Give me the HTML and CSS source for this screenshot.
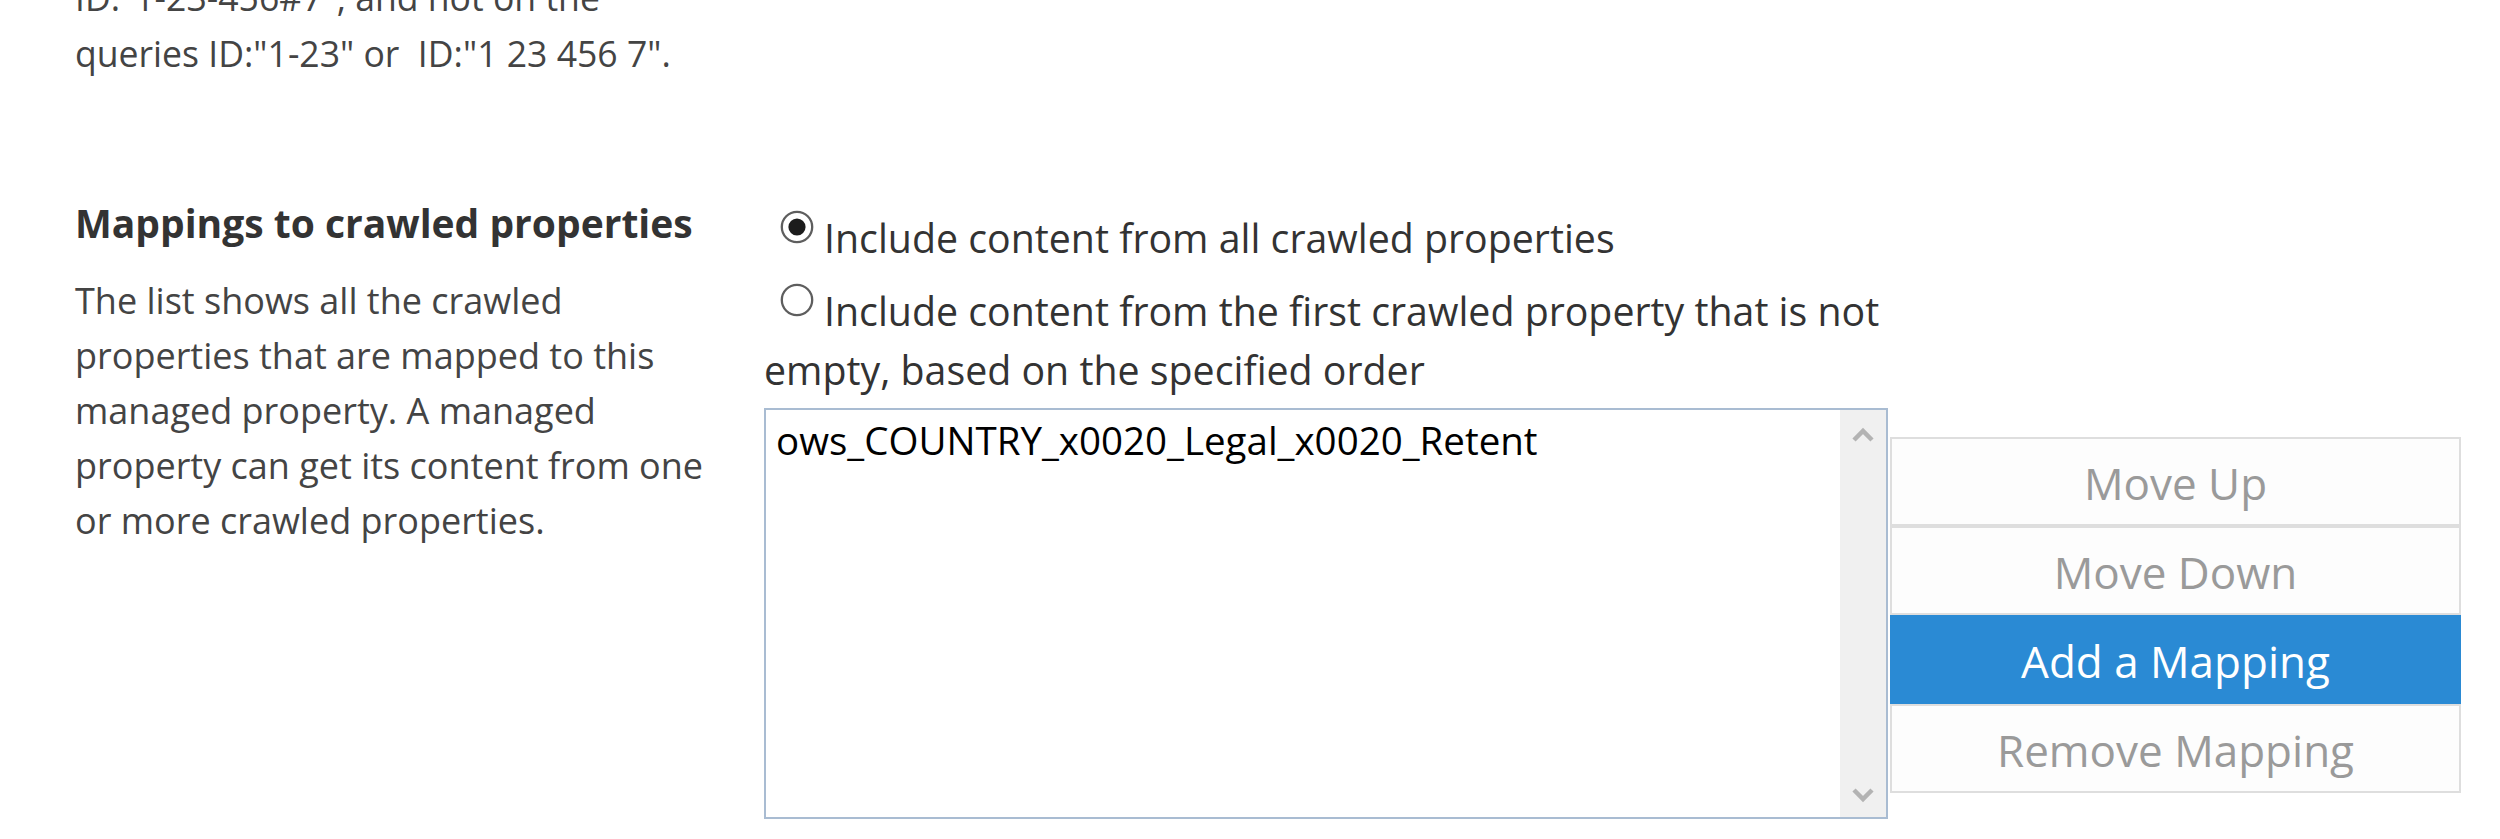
FILE: index.html
```html
<!DOCTYPE html>
<html lang="en">
<head>
<meta charset="utf-8">
<title>Mappings to crawled properties</title>
<link rel="stylesheet" href="styles.css">
</head>
<body>
<div class="page">
  <section class="prev">
    <p class="prev-desc">ID:"1-23-456#7", and not on the<br>queries ID:"1-23" or&nbsp; ID:"1 23 456 7".</p>
  </section>
  <section class="row">
    <div class="left">
      <h3 class="title">Mappings to crawled properties</h3>
      <p class="desc">The list shows all the crawled<br>properties that are mapped to this<br>managed property. A managed<br>property can get its content from one<br>or more crawled properties.</p>
    </div>
    <div class="right">
      <label class="radio"><svg class="rb" viewBox="0 0 34 34" width="34" height="34"><circle cx="17" cy="17" r="15.2" fill="#fff" stroke="#5e5e5e" stroke-width="2.3"/><circle cx="17" cy="17" r="8.6" fill="#1c1c1c"/></svg>Include content from all crawled properties</label>
      <label class="radio"><svg class="rb" viewBox="0 0 34 34" width="34" height="34"><circle cx="17" cy="17" r="15.2" fill="#fff" stroke="#5e5e5e" stroke-width="2.3"/></svg>Include content from the first crawled property that is not<br>empty, based on the specified order</label>
      <div class="mapping">
        <div class="listbox">
          <div class="items">
            <div class="item">ows_COUNTRY_x0020_Legal_x0020_Retent</div>
          </div>
          <div class="scrollbar">
            <svg class="chev" viewBox="0 0 24 16" width="24" height="16"><polyline points="3,13 12,4 21,13" fill="none" stroke="#b3b3b3" stroke-width="4.5"/></svg>
            <svg class="chev" viewBox="0 0 24 16" width="24" height="16"><polyline points="3,3 12,12 21,3" fill="none" stroke="#b3b3b3" stroke-width="4.5"/></svg>
          </div>
        </div>
        <div class="buttons">
          <button class="btn" type="button">Move Up</button>
          <button class="btn" type="button">Move Down</button>
          <button class="btn primary" type="button">Add a Mapping</button>
          <button class="btn" type="button">Remove Mapping</button>
        </div>
      </div>
    </div>
  </section>
</div>
</body>
</html>
```

FILE: styles.css
```css
html, body {
  margin: 0;
  padding: 0;
  background: #ffffff;
}

body {
  font-family: "Open Sans", "Noto Sans", "Liberation Sans", sans-serif;
  overflow: hidden;
}

.page {
  padding-left: 75px;
}

.prev {
  margin-top: -31px;
}

.prev-desc {
  margin: 0;
  font-size: 35.6px;
  line-height: 56px;
  color: #444444;
  white-space: nowrap;
}

.row {
  display: flex;
  margin-top: 117px;
}

.left {
  flex: none;
  width: 689px;
}

.title {
  margin: 0;
  font-size: 39px;
  font-weight: 700;
  line-height: 50px;
  color: #333333;
  white-space: nowrap;
}

.desc {
  margin: 25px 0 0;
  font-size: 36px;
  line-height: 55px;
  color: #444444;
  white-space: nowrap;
}

.right {
  flex: none;
  padding-top: 11px;
}

.radio {
  display: block;
  font-size: 39.3px;
  line-height: 59px;
  color: #333333;
  white-space: nowrap;
}

.radio + .radio {
  margin-top: 14px;
}

.rb {
  display: inline-block;
  width: 34px;
  height: 34px;
  margin: 0 10px 0 16px;
  vertical-align: 8.8px;
}

.mapping {
  display: flex;
  align-items: flex-start;
  margin-top: 8px;
}

.listbox {
  box-sizing: border-box;
  width: 1124px;
  height: 411px;
  border: 2px solid #a9bcd2;
  display: flex;
  background: #ffffff;
}

.items {
  flex: 1;
  padding: 5px 10px;
}

.item {
  font-size: 38.5px;
  line-height: 50px;
  color: #000000;
  white-space: nowrap;
}

.scrollbar {
  flex: none;
  width: 46px;
  background: #f0f0f0;
  display: flex;
  flex-direction: column;
  justify-content: space-between;
  align-items: center;
  padding: 17px 0 14px;
  box-sizing: border-box;
}

.chev {
  display: block;
}

.buttons {
  flex: none;
  width: 571px;
  margin-left: 2px;
  margin-top: 29px;
  display: flex;
  flex-direction: column;
}

.btn {
  box-sizing: border-box;
  height: 89px;
  margin: 0;
  padding: 4px 0 0;
  border: 2px solid #dedede;
  background: #fdfdfd;
  color: #9a9a9a;
  font-family: "Open Sans", "Noto Sans", "Liberation Sans", sans-serif;
  font-size: 44px;
  line-height: 81px;
  text-align: center;
  white-space: nowrap;
  cursor: default;
}

.btn.primary {
  background: #2a8ad4;
  border-color: #2a8ad4;
  color: #ffffff;
}
```
